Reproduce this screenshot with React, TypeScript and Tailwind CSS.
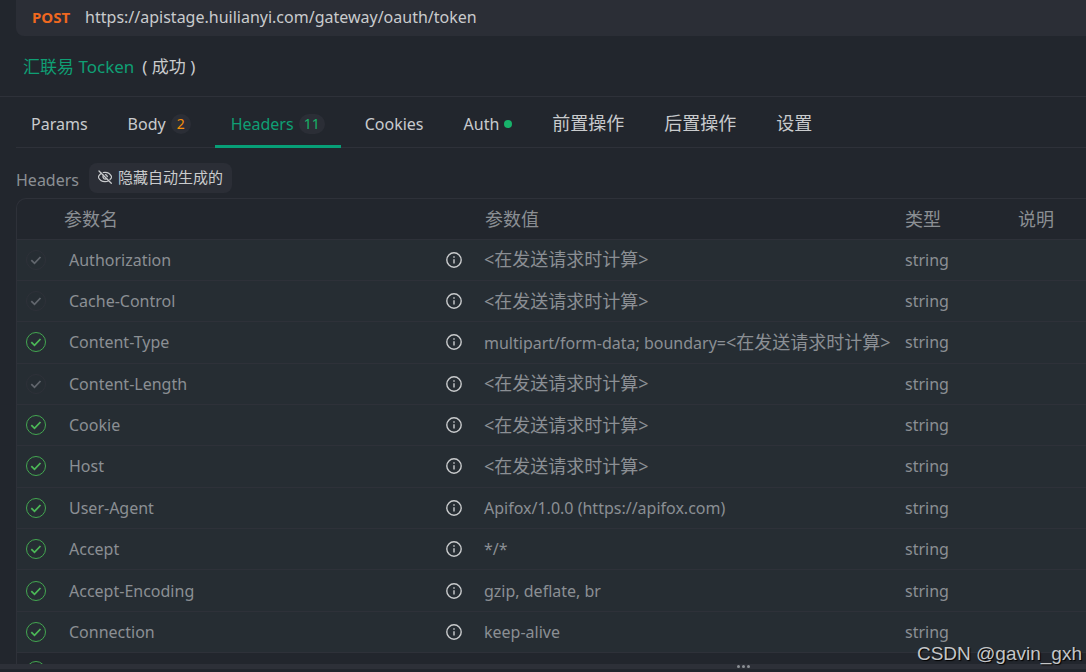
import type { ReactNode } from "react";
import clsx from "clsx";

interface Tab {
  label: string;
  count?: number;
  countColor?: string;
  dot?: boolean;
  active?: boolean;
  cjk?: boolean;
}

interface HeaderRow {
  name: string;
  value: ReactNode;
  type: string;
  checked: boolean;
}

const tabs: Tab[] = [
  { label: "Params" },
  { label: "Body", count: 2, countColor: "text-[#f79009]" },
  { label: "Headers", count: 11, countColor: "text-[#17b26a]", active: true },
  { label: "Cookies" },
  { label: "Auth", dot: true },
  { label: "前置操作", cjk: true },
  { label: "后置操作", cjk: true },
  { label: "设置", cjk: true },
];

// Values that are only known once the request is sent
function Computed() {
  return <span className="text-[18px]">&lt;在发送请求时计算&gt;</span>;
}

const rows: HeaderRow[] = [
  { name: "Authorization", value: <Computed />, type: "string", checked: false },
  { name: "Cache-Control", value: <Computed />, type: "string", checked: false },
  { name: "Content-Type", value: <>multipart/form-data; boundary=<Computed /></>, type: "string", checked: true },
  { name: "Content-Length", value: <Computed />, type: "string", checked: false },
  { name: "Cookie", value: <Computed />, type: "string", checked: true },
  { name: "Host", value: <Computed />, type: "string", checked: true },
  { name: "User-Agent", value: "Apifox/1.0.0 (https://apifox.com)", type: "string", checked: true },
  { name: "Accept", value: "*/*", type: "string", checked: true },
  { name: "Accept-Encoding", value: "gzip, deflate, br", type: "string", checked: true },
  { name: "Connection", value: "keep-alive", type: "string", checked: true },
];

function InfoIcon() {
  return (
    <svg className="size-4" viewBox="0 0 16 16" fill="none" stroke="currentColor" strokeWidth="1.4">
      <circle cx="8" cy="8" r="7.2" />
      <path d="M8 7.2v4.3M8 4.3v1.5" />
    </svg>
  );
}

function EyeOffIcon() {
  return (
    <svg className="size-[14px]" viewBox="1 1 14 14" fill="none" stroke="currentColor" strokeWidth="1.3" strokeLinecap="round">
      <path d="M2 2l12.3 12.3" />
      <path d="M4.4 4.3C2.9 5.2 1.8 6.6 1.2 8c1.2 2.9 3.9 4.7 6.8 4.7 1.3 0 2.5-.35 3.5-.95" />
      <path d="M6.3 3.5C6.8 3.35 7.4 3.3 8 3.3c2.9 0 5.6 1.8 6.8 4.7-.4.9-1 1.8-1.8 2.5" />
      <path d="M6.4 6.4a2.3 2.3 0 0 0 3.2 3.2M8.4 5.7A2.3 2.3 0 0 1 10.3 7.6" />
    </svg>
  );
}

function RowCheckbox({ label, checked }: { label: string; checked: boolean }) {
  return (
    <label
      className={clsx(
        "mx-auto grid size-5 place-items-center rounded-full border",
        checked ? "border-[#43a750] text-[#4cb857]" : "border-[#2e3139] text-[#61666d]"
      )}
    >
      <input
        type="checkbox"
        aria-label={label}
        defaultChecked={checked}
        className="col-start-1 row-start-1 size-4 appearance-none"
      />
      <svg className="pointer-events-none col-start-1 row-start-1 size-3" viewBox="0 0 12 12" fill="none" stroke="currentColor" strokeWidth="1.8">
        <path d="M1.3 6.2l3.2 3.1 6-6.3" />
      </svg>
    </label>
  );
}

export default function App() {
  return (
    <div className="relative flex h-screen flex-col overflow-hidden bg-[#22262d] font-['Noto_Sans','Noto_Sans_CJK_SC',sans-serif] text-[16px] text-[#c9cbcd]">
      {/* Request line */}
      <div className="ml-4 flex h-9 shrink-0 items-center gap-[15px] rounded-bl-lg bg-[#2b2e36] pb-0.5 pl-4">
        <span className="text-[15px] font-bold text-[#ef6820]">POST</span>
        <input
          type="text"
          aria-label="URL"
          defaultValue="https://apistage.huilianyi.com/gateway/oauth/token"
          className="min-w-0 flex-1 bg-transparent outline-none"
        />
      </div>

      {/* Request title */}
      <div className="flex h-[61px] shrink-0 items-center gap-2 border-b border-[#2e3139] px-[23px] pt-0.5 text-[17px]">
        <a href="#" className="text-[#0f9f74]">汇联易 Tocken</a>
        <span>( 成功 )</span>
      </div>

      {/* Tabs */}
      <div role="tablist" className="ml-4 flex h-[51px] shrink-0 gap-2 border-b border-[#2e3139]">
        {tabs.map((tab) => (
          <button
            key={tab.label}
            role="tab"
            aria-selected={!!tab.active}
            className={clsx(
              "-mb-px flex items-center gap-[5px] border-b-3 px-4 pt-[5px] whitespace-nowrap first:pl-[15px]",
              tab.active ? "border-[#079f77] text-[#0f9f74]" : "border-transparent",
              tab.cjk && "text-[18px]"
            )}
          >
            {tab.label}
            {tab.count && (
              <span className={clsx("min-w-5 rounded-full bg-[#2b2e36] px-[5px] text-center text-[14px] leading-5", tab.countColor)}>
                {tab.count}
              </span>
            )}
            {tab.dot && <span className="size-2 rounded-full bg-[#17b26a]" />}
          </button>
        ))}
      </div>

      {/* Toolbar */}
      <div className="flex h-[50px] shrink-0 items-center gap-[10px] px-4 pt-[14px]">
        <span className="text-[#8b8f94]">Headers</span>
        <button className="mb-1 flex h-[30px] items-center gap-[6px] rounded-lg bg-[#2b2e36] px-[9px] pb-0.5 text-[15px]">
          <EyeOffIcon />
          隐藏自动生成的
        </button>
      </div>

      {/* Headers table */}
      <div className="ml-4 min-h-0 flex-1 overflow-hidden rounded-tl-[10px] border-t border-l border-[#2e3139]">
        <table className="h-[495px] w-full table-fixed text-left leading-6 text-[#8b8f94]">
          <colgroup>
            <col className="w-[38px]" />
            <col />
            <col />
            <col className="w-[113px]" />
            <col className="w-[78px]" />
          </colgroup>
          <thead className="text-[18px]">
            <tr className="h-[40px] border-b border-[#2e3139]">
              <th />
              <th className="pl-[9px] font-normal">参数名</th>
              <th className="pl-[10px] font-normal">参数值</th>
              <th className="pl-[10px] font-normal">类型</th>
              <th className="pl-[10px] font-normal">说明</th>
            </tr>
          </thead>
          <tbody>
            {rows.map((row) => (
              <tr key={row.name} className="h-[41px] border-b border-[#2e3139] bg-[#262d33]">
                <td>
                  <RowCheckbox label={row.name} checked={row.checked} />
                </td>
                <td className="pr-[13px] pl-[14px]">
                  <div className="flex items-center justify-between">
                    {row.name}
                    <button aria-label={`About ${row.name}`} className="text-[#c9cbcd]">
                      <InfoIcon />
                    </button>
                  </div>
                </td>
                <td className="pl-[9px] whitespace-nowrap">{row.value}</td>
                <td className="pl-[10px]">{row.type}</td>
                <td />
              </tr>
            ))}
            <tr className="h-[41px]">
              <td className="pt-2 align-top">
                <RowCheckbox label="New header" checked />
              </td>
              <td colSpan={4} />
            </tr>
          </tbody>
        </table>
      </div>

      {/* Resize handle */}
      <div className="mb-[3px] flex h-[5px] shrink-0 items-center justify-center bg-[#2d3038] pl-[37%]">
        <div className="flex gap-[2px]">
          <span className="size-[3px] rounded-full bg-[#8b8f94]" />
          <span className="size-[3px] rounded-full bg-[#8b8f94]" />
          <span className="size-[3px] rounded-full bg-[#8b8f94]" />
        </div>
      </div>

      <div className="absolute right-1 bottom-1 font-['Liberation_Sans',sans-serif] text-[19px] leading-7 text-[#c4c6c8] [text-shadow:1px_1px_1px_#000]">
        CSDN @gavin_gxh
      </div>
    </div>
  );
}
